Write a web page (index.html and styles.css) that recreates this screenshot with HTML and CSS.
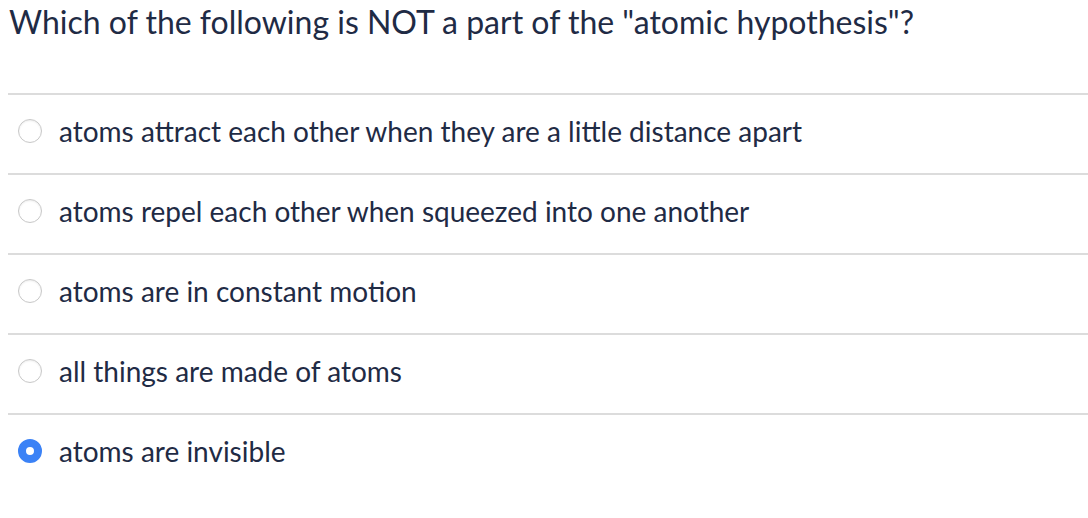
FILE: index.html
```html
<!DOCTYPE html>
<html lang="en">
<head>
  <meta charset="UTF-8">
  <title>Quiz Question</title>
  <link rel="stylesheet" href="styles.css">
</head>
<body>
  <div class="question">
    <h2 class="question-text">Which of the following is NOT a part of the "atomic hypothesis"?</h2>
    <div class="answers">
      <label class="answer">
        <input type="radio" name="q1" />
        <span class="radio"></span>
        <span class="answer-text">atoms attract each other when they are a little distance apart</span>
      </label>
      <label class="answer">
        <input type="radio" name="q1" />
        <span class="radio"></span>
        <span class="answer-text">atoms repel each other when squeezed into one another</span>
      </label>
      <label class="answer">
        <input type="radio" name="q1" />
        <span class="radio"></span>
        <span class="answer-text">atoms are in constant motion</span>
      </label>
      <label class="answer">
        <input type="radio" name="q1" />
        <span class="radio"></span>
        <span class="answer-text">all things are made of atoms</span>
      </label>
      <label class="answer">
        <input type="radio" name="q1" checked />
        <span class="radio"></span>
        <span class="answer-text">atoms are invisible</span>
      </label>
    </div>
  </div>
</body>
</html>
```

FILE: styles.css
```css
* {
  margin: 0px;
  padding: 0px;
  box-sizing: border-box;
}

body {
  font-family: Lato, "Open Sans", sans-serif;
  color: #1f2b45;
  background-color: #fff;
}

.question-text {
  font-size: 32px;
  font-weight: 400;
  line-height: 44px;
  padding: 0px 0px 0px 9px;
  margin-bottom: 49px;
}

.answers {
  margin-left: 8px;
}

.answer {
  display: flex;
  align-items: center;
  height: 80px;
  padding-bottom: 6px;
  border-top: 2px solid #dcdcdc;
  cursor: pointer;
}

.answer input {
  display: none;
}

.radio {
  width: 24px;
  height: 24px;
  margin-left: 10px;
  margin-right: 17px;
  border: 1px solid #c8c8c8;
  border-radius: 50%;
  background-color: #fff;
  box-shadow: inset 0px 1px 2px rgba(0, 0, 0, 0.08);
}

.answer input:checked + .radio {
  border: 8px solid #3b82f6;
  box-shadow: none;
}

.answer-text {
  font-size: 28px;
  line-height: 34px;
}
```
